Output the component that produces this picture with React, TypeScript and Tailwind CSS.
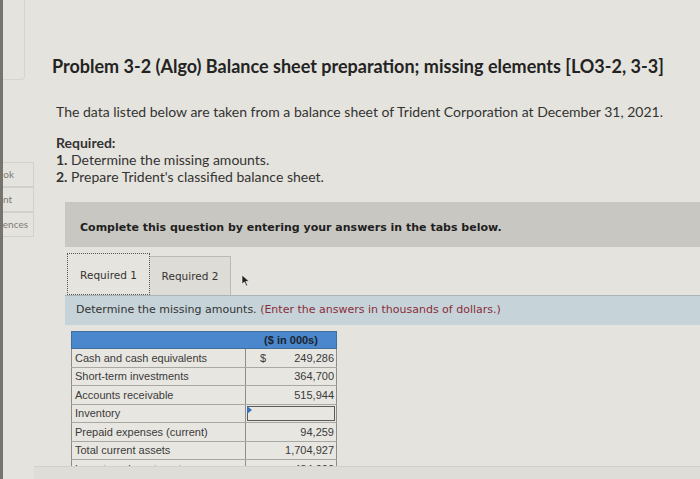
import React from 'react';

const rows = [
  { label: 'Cash and cash equivalents', sign: '$', value: '249,286' },
  { label: 'Short-term investments', sign: '', value: '364,700' },
  { label: 'Accounts receivable', sign: '', value: '515,944' },
  { label: 'Inventory', sign: '', value: '', input: true },
  { label: 'Prepaid expenses (current)', sign: '', value: '94,259' },
  { label: 'Total current assets', sign: '', value: '1,704,927' },
  { label: 'Long-term investments', sign: '', value: '484,000' },
];

// only the tail of each sidebar label is on screen in the picture
const side = [
  { label: 'ok', pad: 'pr-[19px]' },
  { label: 'nt', pad: 'pr-[21px]' },
  { label: 'ences', pad: 'pr-[5px]' },
];

export default function App() {
  return (
    <div
      className="w-[700px] h-[479px] overflow-hidden bg-[#e5e3dd] flex text-[#2a2a2a]"
      style={{ fontFamily: 'Lato, "Open Sans", sans-serif' }}
    >
      {/* left rail */}
      <div className="w-[3px] h-full bg-[#77746f] shrink-0" />
      <div className="w-[31px] shrink-0 flex flex-col">
        <div className="h-[80px] w-[22px] shrink-0 border border-l-0 border-t-0 border-[#d6d4ce] rounded-br-[4px]" />
        <div className="mt-[82px] flex flex-col shrink-0">
          {side.map((s) => (
            <div
              key={s.label}
              className={`h-[25px] flex items-center justify-end border border-l-0 border-[#d2d0ca] text-[10px] text-[#7b7a76] ${s.pad}`}
            >
              {s.label}
            </div>
          ))}
        </div>
      </div>

      {/* main */}
      <div className="flex-1 flex flex-col h-full">
        <div className="h-[466px] shrink-0 flex flex-col overflow-hidden">
          <h1 className="shrink-0 mt-[55px] ml-[18px] text-[18px] font-bold leading-[22px] text-[#232323] whitespace-nowrap">
            Problem 3-2 (Algo) Balance sheet preparation; missing elements [LO3-2, 3-3]
          </h1>
          <p className="shrink-0 mt-[26px] ml-[22px] text-[14px] leading-[18px] text-[#333] whitespace-nowrap">
            The data listed below are taken from a balance sheet of Trident Corporation at December 31, 2021.
          </p>
          <div className="shrink-0 mt-[13px] ml-[22px] text-[14px] leading-[17px] text-[#333]">
            <div className="font-bold">Required:</div>
            <div>
              <span className="font-bold">1.</span> Determine the missing amounts.
            </div>
            <div>
              <span className="font-bold">2.</span> Prepare Trident's classified balance sheet.
            </div>
          </div>

          <div
            className="shrink-0 mt-[17px] ml-[31px] h-[45px] bg-[#c9c7c2] pl-[15px] pt-[12px]"
            style={{ fontFamily: '"DejaVu Sans", Verdana, sans-serif' }}
          >
            <span className="text-[11px] font-bold text-[#1f1f1f]">
              Complete this question by entering your answers in the tabs below.
            </span>
          </div>

          <div
            className="shrink-0 ml-[31px] mt-[6px] flex flex-col"
            style={{ fontFamily: '"DejaVu Sans", Verdana, sans-serif' }}
          >
            <div className="flex items-end h-[42px] pl-[2px]">
              <div className="h-[42px] w-[83px] pt-[3px] border border-dotted border-[#555] bg-[#e6e4de] flex items-center justify-center text-[10.5px] text-[#333]">
                Required 1
              </div>
              <div className="h-[39px] w-[81px] pt-[2px] border border-l-0 border-b-0 border-[#bcbab4] bg-[#dedcd6] flex items-center justify-center text-[10.5px] text-[#333]">
                Required 2
              </div>
              <svg className="ml-[10px] mb-[8px]" width="10" height="13" viewBox="0 0 10 13">
                <path d="M1 1 L1 10 L3.4 8 L5.2 12 L6.6 11.3 L4.8 7.5 L8 7.3 Z" fill="#222" stroke="#fff" strokeWidth="0.6" />
              </svg>
            </div>
            <div className="h-[30px] bg-[#c6d3d8] border-t border-[#aab5b9] flex items-center pl-[11px] text-[11px] whitespace-nowrap">
              <span className="text-[#333]">Determine the missing amounts.&nbsp;</span>
              <span className="text-[#8a2d3a]">(Enter the answers in thousands of dollars.)</span>
            </div>

            <div className="mt-[6px] ml-[6px] w-[266px]" style={{ fontFamily: '"Liberation Sans", Arial, sans-serif' }}>
              <div className="flex h-[18px] bg-[#4a87cc] border border-[#3f6f9f]">
                <div className="w-[174px]" />
                <div className="flex-1 flex items-center justify-center text-[11px] font-bold text-[#1b2430]">
                  ($ in 000s)
                </div>
              </div>
              {rows.map((r) => (
                <div key={r.label} className="flex h-[18.5px] bg-[#e8e6e1] border-b border-[#a9a8a3] text-[11px] text-[#3a3a3a]">
                  <div className="w-[175px] border-l border-r border-[#8e8d89] flex items-center pl-[3px] whitespace-nowrap">
                    {r.label}
                  </div>
                  <div className="flex-1 relative flex items-center pr-[2px] border-r border-[#8e8d89]">
                    {r.input ? (
                      <>
                        <div className="absolute inset-[1px] border border-[#5c5b58]" />
                        <div className="absolute left-[1px] top-[1px] w-0 h-0 border-t-[4px] border-b-[4px] border-l-[5px] border-t-transparent border-b-transparent border-l-[#3b6fc4]" />
                      </>
                    ) : (
                      <>
                        <span className="ml-[14px]">{r.sign}</span>
                        <span className="ml-auto">{r.value}</span>
                      </>
                    )}
                  </div>
                </div>
              ))}
            </div>
          </div>
        </div>
        {/* bottom edge of the question frame */}
        <div className="flex-1 border-t border-[#d3d1cb] bg-[#dfddd7]" />
      </div>
    </div>
  );
}
